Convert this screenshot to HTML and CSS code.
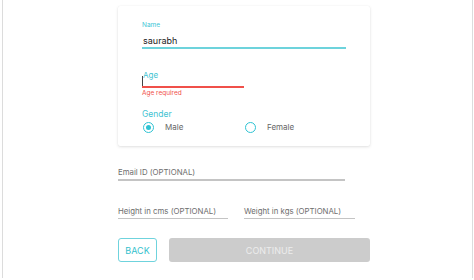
FILE: index.html
```html
<!DOCTYPE html>
<html>
<head>
<meta charset="utf-8">
<link rel="stylesheet" href="styles.css">
</head>
<body>
<div class="frame">
  <div class="column">
    <div class="card">
      <div class="field name-field">
        <div class="float-label teal">Name</div>
        <div class="value">saurabh</div>
        <div class="line line-teal"></div>
      </div>
      <div class="field age-field">
        <div class="age-input">
          <span class="cursor"></span>
          <span class="age-label">Age</span>
        </div>
        <div class="line line-red"></div>
        <div class="error">Age required</div>
      </div>
      <div class="gender">
        <div class="gender-label">Gender</div>
        <div class="radios">
          <div class="radio-item">
            <span class="radio checked"><span class="dot"></span></span>
            <span class="radio-text">Male</span>
          </div>
          <div class="radio-item">
            <span class="radio"></span>
            <span class="radio-text">Female</span>
          </div>
        </div>
      </div>
    </div>
    <div class="plain email">
      <div class="placeholder">Email ID (OPTIONAL)</div>
      <div class="line line-gray"></div>
    </div>
    <div class="pair">
      <div class="plain half">
        <div class="placeholder">Height in cms (OPTIONAL)</div>
        <div class="line line-gray"></div>
      </div>
      <div class="plain half half2">
        <div class="placeholder">Weight in kgs (OPTIONAL)</div>
        <div class="line line-gray"></div>
      </div>
    </div>
    <div class="buttons">
      <button class="btn back">BACK</button>
      <button class="btn continue">CONTINUE</button>
    </div>
  </div>
</div>
</body>
</html>
```
FILE: styles.css
```css
html, body {
  margin: 0;
  padding: 0;
  background: #ffffff;
}
body {
  font-family: Inter, "Noto Sans", Roboto, sans-serif;
  width: 474px;
  height: 280px;
  overflow: hidden;
}
.frame {
  margin-left: 2px;
  width: 471px;
  height: 278px;
  border-left: 1px solid #dcdcdc;
  border-right: 1px solid #dcdcdc;
  box-sizing: border-box;
}
.column {
  margin-left: 115px;
  width: 252px;
  padding-top: 6px;
}
.card {
  height: 140px;
  box-sizing: border-box;
  padding: 15px 0 0 24px;
  background: #fff;
  box-shadow: 0 1px 3px rgba(0,0,0,0.12), 0 0 1px rgba(0,0,0,0.08);
  border-radius: 2px;
}
.teal { color: #3cc6d6; }
.float-label {
  font-size: 6.5px;
  line-height: 8px;
}
.value {
  margin-top: 6px;
  font-size: 9px;
  line-height: 11px;
  color: #222;
  padding-left: 1px;
}
.line {
  height: 1px;
}
.line-teal {
  width: 204px;
  height: 2px;
  background: #6dd3dc;
  margin-top: 1px;
}
.age-field {
  margin-top: 21px;
}
.age-input {
  position: relative;
  height: 16px;
}
.cursor {
  position: absolute;
  left: 0;
  top: 6px;
  width: 1px;
  height: 10px;
  background: #444;
}
.age-label {
  position: absolute;
  left: 1px;
  top: 0;
  font-size: 8px;
  line-height: 10px;
  color: #3fc3d2;
}
.line-red {
  width: 102px;
  background: #f0504a;
  height: 1.5px;
}
.error {
  margin-top: 1px;
  font-size: 6.5px;
  line-height: 8px;
  color: #f0504a;
}
.gender {
  margin-top: 12px;
}
.gender-label {
  font-size: 8.5px;
  line-height: 11px;
  color: #3fc3d2;
}
.radios {
  display: flex;
  margin-top: 2px;
}
.radio-item {
  display: flex;
  align-items: center;
  width: 102px;
}
.radio {
  width: 9px;
  height: 9px;
  border: 1.5px solid #2ec3d3;
  border-radius: 50%;
  display: flex;
  align-items: center;
  justify-content: center;
  margin-left: 1px;
}
.dot {
  width: 5px;
  height: 5px;
  border-radius: 50%;
  background: #2ec3d3;
}
.radio-text {
  margin-left: 11px;
  font-size: 8px;
  color: #666;
}
.plain {
  width: 227px;
}
.email {
  margin-top: 21px;
}
.placeholder {
  font-size: 7.8px;
  line-height: 10px;
  color: #6e6e6e;
}
.line-gray {
  margin-top: 2px;
  height: 1.5px;
  background: #c4c4c4;
}
.pair {
  display: flex;
  gap: 16px;
  margin-top: 25px;
}
.half {
  width: 110px;
}
.half2 {
  width: 111px;
}
.buttons {
  display: flex;
  gap: 12px;
  margin-top: 19px;
}
.btn {
  font-family: Inter, "Noto Sans", Roboto, sans-serif;
  height: 24px;
  border-radius: 3px;
  font-size: 9px;
  padding: 0;
}
.back {
  width: 39px;
  background: #fff;
  border: 1px solid #6fd3dd;
  color: #35bfcd;
}
.continue {
  flex: 1;
  background: #cccccc;
  border: none;
  color: #ececec;
}
```
